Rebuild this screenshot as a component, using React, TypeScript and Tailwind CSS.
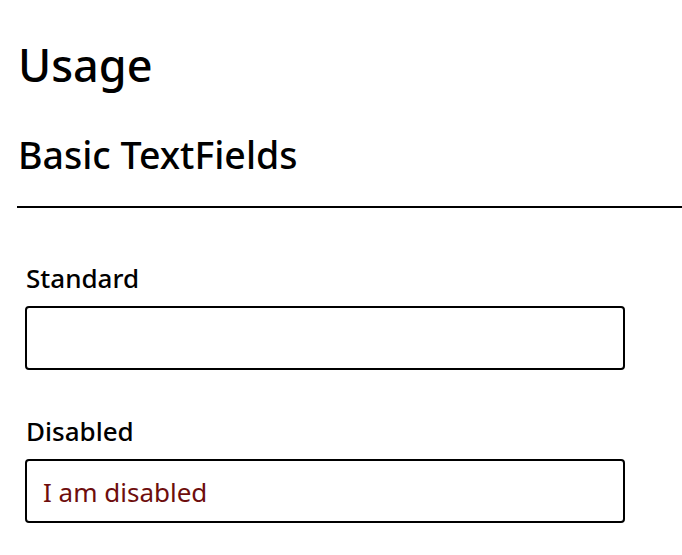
export default function App() {
  return (
    <div className="min-h-[555px] bg-white pl-[17px] pt-[34px] text-black" style={{ fontFamily: '"Noto Sans", "Open Sans", sans-serif' }}>
      <h1 className="text-[45px] font-medium leading-[62px] ml-[1px]">Usage</h1>
      <h2 className="mt-[33px] text-[37.5px] font-medium leading-[52px] pb-[25px] border-b-2 border-black pl-[1px]">Basic TextFields</h2>
      <div className="pl-[8px] pt-[52px] w-[608px]">
        <label className="block text-[26px] font-medium leading-[36px] pl-[1px]">Standard</label>
        <div className="mt-[10px] h-[64px] rounded-[4px] border-2 border-black" />
        <label className="block mt-[43px] text-[26px] font-medium leading-[36px] pl-[1px]">Disabled</label>
        <div className="mt-[10px] h-[64px] rounded-[4px] border-2 border-black flex items-center pl-[16px] pt-[3px] text-[26px] text-[#6e0d0d]">
          I am disabled
        </div>
      </div>
    </div>
  );
}
